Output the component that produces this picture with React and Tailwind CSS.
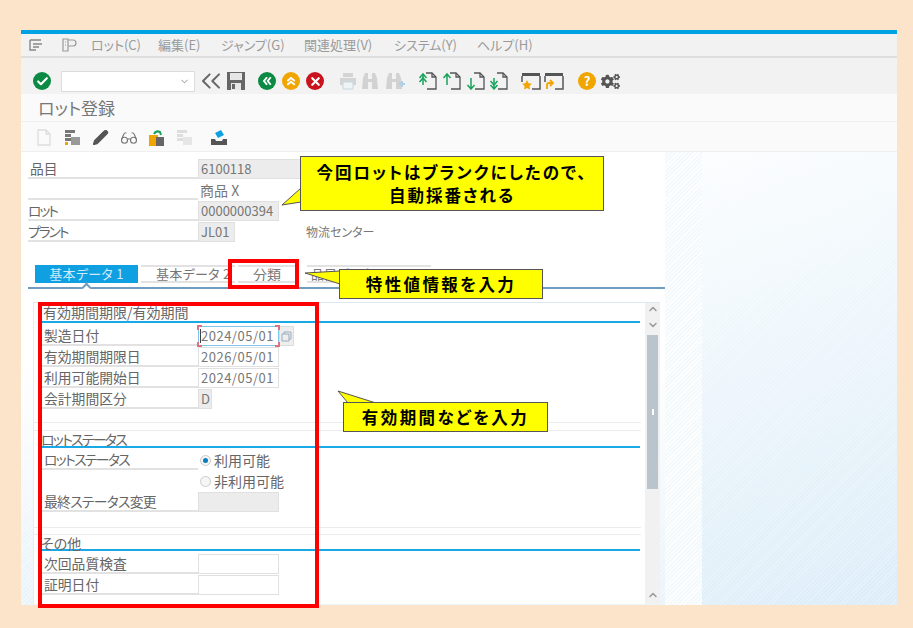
import React from 'react';
import { ChevronUp, ChevronDown, ChevronsLeft, Check, X, Pencil, Glasses } from 'lucide-react';
import { FaCogs } from 'react-icons/fa';

const menus = [
    { text: 'ロット(C)', w: 'w-[67px]' },
    { text: '編集(E)', w: 'w-[63px]' },
    { text: 'ジャンプ(G)', w: 'w-[83px]' },
    { text: '関連処理(V)', w: 'w-[90px]' },
    { text: 'システム(Y)', w: 'w-[83px]' },
    { text: 'ヘルプ(H)', w: 'w-[60px]' },
];

const panelLabel = 'w-[156px] pl-[2px]';

function Round({ color, children, className = '' }) {
    return <div className={`w-[18px] h-[18px] rounded-full flex items-center justify-center text-white ${color} ${className}`}>{children}</div>;
}

function Double({ dir }) {
    const d = dir === 'left' ? 'M8 3 4 8l4 5M13 3 9 8l4 5' : 'M3 8l5-4 5 4M3 13l5-4 5 4';
    return <svg width="12" height="12" viewBox="0 0 16 16" fill="none" stroke="#fff" strokeWidth="2.6"><path d={d} /></svg>;
}

function Save() {
    return (
        <svg width="18" height="18" viewBox="0 0 18 18">
            <path d="M0 0h18v18H0z" fill="#666" />
            <path d="M3 1h12v7H3z" fill="#e6e6e6" />
            <path d="M4 11h10v7H4z" fill="#e6e6e6" />
            <path d="M5 12h3v5H5z" fill="#666" />
        </svg>
    );
}

function Printer({ className }) {
    return (
        <svg width="18" height="18" viewBox="0 0 18 18" className={className}>
            <path d="M4 1h10v4H4z" fill="#d4d4d4" />
            <path d="M1 6h16v7H1z" fill="#d4d4d4" />
            <path d="M4 10h10v7H4z" fill="#eef3f6" stroke="#c8d8e0" />
        </svg>
    );
}

function Binoculars({ plus, className }) {
    return (
        <svg width="20" height="18" viewBox="0 0 20 18" className={className}>
            <path d="M2 6 4 1h3v6h4V1h3l2 5 1 11h-6V10H7v7H1z" fill="#d2d2d2" />
            {plus && <path d="M14 12h6M17 9v6" stroke="#a9d2ea" strokeWidth="2" />}
        </svg>
    );
}

function PageArrow({ down, dbl, className }) {
    const arrow = down ? 'M5 6v11M1.5 13 5 17l3.5-4' : 'M5 2v11M1.5 6 5 2l3.5 4';
    return (
        <svg width="20" height="18" viewBox="0 0 20 18" fill="none" className={className}>
            <path d="M8 1h6l4 4v12H9" stroke="#555" strokeWidth="1.3" />
            <path d="M14 1v4h4" stroke="#555" strokeWidth="1.3" />
            <path d={arrow} stroke="#19a35c" strokeWidth="1.5" />
            {dbl && <path d={down ? 'M1.5 9 5 13l3.5-4' : 'M1.5 10 5 6l3.5 4'} stroke="#19a35c" strokeWidth="1.5" />}
        </svg>
    );
}

function Win({ star, className }) {
    return (
        <svg width="20" height="18" viewBox="0 0 20 18" fill="none" className={className}>
            <path d="M1 1h18v3H1z" fill="#555" />
            <path d="M1 4v6M19 4v13h-8" stroke="#555" strokeWidth="1.5" />
            {star ? <path d="m6 8 1.6 3.2 3.4.5-2.5 2.4.6 3.4L6 16l-3 1.5.6-3.4L1 11.7l3.4-.5z" fill="#f0a500" />
                : <path d="M3 17v-4q0-2 2-2h3M6 8l3 3-3 3" stroke="#f0a500" strokeWidth="1.8" />}
        </svg>
    );
}

function Field({ label, w = 'w-[170px]', children }) {
    return (
        <div className="flex h-[20px] mb-px">
            <div className={`${w} shrink-0 border-b-2 border-[#e2e2e2] text-[13.8px] leading-[19px] text-[#666] whitespace-nowrap`}>{label}</div>
            {children}
        </div>
    );
}

function Box({ w, gray, children }) {
    return (
        <div className={`${w} h-[20px] border border-[#e0e0e0] pl-[2px] text-[13px] leading-[18px] text-[#777] whitespace-nowrap ${gray ? 'bg-[#ececec]' : 'bg-white'}`}>{children}</div>
    );
}

function Section({ title, h, pl = 'pl-[5px]', gap = 'mt-[3px]', children }) {
    return (
        <div>
            <div className={`ml-[4px] mr-[20px] ${h} border-b-2 border-[#18a9e6] ${pl} text-[14px] leading-[16px] text-[#666] whitespace-nowrap`}>{title}</div>
            <div className={`pl-[8px] w-[285px] ${gap}`}>{children}</div>
        </div>
    );
}

function Radio({ on, label }) {
    return (
        <div className="flex items-center text-[14px] text-[#666] h-[20px] pl-[2px]">
            <div className="w-[11px] h-[11px] rounded-full border border-[#ccc] bg-[#f5f5f5] flex items-center justify-center mr-[3px]">
                {on && <div className="w-[5px] h-[5px] rounded-full bg-[#0a7cc0]" />}
            </div>
            {label}
        </div>
    );
}

function Tab({ w, active, children }) {
    return (
        <div className={`${w} h-[18px] flex items-center justify-center text-[13px] whitespace-nowrap overflow-hidden ${active ? 'bg-[#0fa0e2] text-[#cdeafa]' : 'bg-white border-y-2 border-[#e2e2e2] text-[#777]'}`}>{children}</div>
    );
}

function Callout({ className, children }) {
    return <div className={`absolute bg-[#ffff00] border border-[#555] flex items-center justify-center text-center font-bold text-black ${className}`}>{children}</div>;
}

export default function App() {
    return (
        <div className="relative h-[628px] bg-[#fce4cb] pt-[30px] pl-[21px] overflow-hidden font-['Noto_Sans_CJK_JP',sans-serif] [font-feature-settings:'palt']">
            <div className="w-[876px] h-[575px] flex flex-col border-t-4 border-[#00a2e3] bg-white">
                {/* menu bar */}
                <div className="h-[24px] shrink-0 bg-[#f2f2f2] border-b-2 border-[#dedede] flex items-center pl-[8px] text-[13px] text-[#9a9a9a]">
                    <svg width="14" height="12" viewBox="0 0 14 12" fill="none" stroke="#888" strokeWidth="1.4"><path d="M1 1h11M1 1v10h6M4 5h9M4 8h6" /></svg>
                    <svg width="16" height="14" viewBox="0 0 16 14" fill="none" stroke="#999" strokeWidth="1.2" className="ml-[19px] mr-[13px]"><path d="M1 1h5v12H1zM6 2h5q3 0 3 3t-3 3H6M3 4h1M3 7h1" /></svg>
                    {menus.map((m) => <span key={m.text} className={`${m.w} whitespace-nowrap`}>{m.text}</span>)}
                </div>

                {/* system toolbar */}
                <div className="h-[36px] shrink-0 bg-[#f2f2f2] flex items-center pl-[12px] pt-[10px]">
                    <Round color="bg-[#0a8a42]"><Check size={13} strokeWidth={4} /></Round>
                    <div className="w-[134px] h-[21px] ml-[10px] bg-white border border-[#dcdcdc] flex items-center justify-end pr-[4px]">
                        <ChevronDown size={11} className="text-[#888]" />
                    </div>
                    <ChevronsLeft size={32} strokeWidth={1.5} className="text-[#666]" />
                    <Save />
                    <Round color="bg-[#0a8a42]" className="ml-[13px]"><Double dir="left" /></Round>
                    <Round color="bg-[#f0a500]" className="ml-[6px]"><Double dir="up" /></Round>
                    <Round color="bg-[#c9141e]" className="ml-[6px]"><X size={13} strokeWidth={4} /></Round>
                    <Printer className="ml-[15px]" />
                    <Binoculars className="ml-[4px]" />
                    <Binoculars plus className="ml-[4px]" />
                    <PageArrow dbl className="ml-[13px]" />
                    <PageArrow className="ml-[4px]" />
                    <PageArrow down className="ml-[4px]" />
                    <PageArrow down dbl className="ml-[3px]" />
                    <Win star className="ml-[12px]" />
                    <Win className="ml-[3px]" />
                    <Round color="bg-[#f0a500]" className="ml-[14px] text-[13px] font-bold">?</Round>
                    <FaCogs size={19} className="text-[#555] ml-[5px]" />
                </div>

                {/* title */}
                <div className="h-[28px] shrink-0 bg-[#fafafa] border-b border-[#efefef] pl-[17px] text-[17px] leading-[28px] text-[#777]">ロット登録</div>

                {/* app toolbar */}
                <div className="h-[30px] shrink-0 bg-[#fafafa] border-b border-[#efefef] flex items-center pl-[16px] pt-[2px]">
                    <svg width="14" height="17" viewBox="0 0 14 17" fill="none" stroke="#ddd" strokeWidth="1.3"><path d="M1 1h8l4 4v11H1zM9 1v4h4" /></svg>
                    <svg width="17" height="17" viewBox="0 0 17 17" className="ml-[13px]"><path d="M1 1h10v3H1zM1 5h6v3H1zM1 9h6v3H1z" fill="#777" /><path d="M7 8h9v8H7z" fill="#999" /><path d="M1 13h3v3H1z" fill="#f0a500" /></svg>
                    <Pencil size={17} fill="#555" strokeWidth={1.5} className="text-[#555] ml-[11px]" />
                    <Glasses size={18} strokeWidth={1.5} className="text-[#777] ml-[11px]" />
                    <svg width="17" height="18" viewBox="0 0 17 18" className="ml-[10px]"><path d="M1 6h9v11H1z" fill="#f0a500" /><path d="M8 8h8v9H8z" fill="#666" /><path d="M6 5q2-4 6-2l1 3" stroke="#19a35c" strokeWidth="2" fill="none" /></svg>
                    <svg width="17" height="17" viewBox="0 0 17 17" className="ml-[11px]"><path d="M1 1h10v3H1zM1 5h6v3H1zM1 9h6v3H1z" fill="#dedede" /><path d="M7 8h9v8H7z" fill="#e6e6e6" /></svg>
                    <svg width="18" height="17" viewBox="0 0 18 17" className="ml-[17px]"><path d="m5 4 6-3 3 5-6 3z" fill="#0fa0e2" /><path d="M1 10h4l1 2h6l1-2h4v6H1z" fill="#555" /></svg>
                </div>

                {/* body */}
                <div className="flex-1 flex min-h-0">
                    <div className="w-[644px] shrink-0 pt-[7px] bg-[repeating-linear-gradient(135deg,#ffffff66_0px,#ffffff66_1px,transparent_1px,transparent_3px),linear-gradient(180deg,#ffffff_45%,#e9f3fa_100%)]">
                        <div className="pl-[7px]">
                            <Field label={<span className="pl-[2px]">品目</span>}><Box w="w-[110px]" gray>6100118</Box></Field>
                            <Field label=""><span className="pl-[2px] text-[14px] leading-[20px] text-[#777]">商品 X</span></Field>
                            <Field label={<span className="tracking-[-2px]">ロット</span>}><Box w="w-[81px]" gray>0000000394</Box></Field>
                            <Field label={<span className="tracking-[-2px]">プラント</span>}>
                                <Box w="w-[37px]" gray>JL01</Box>
                                <span className="ml-[71px] text-[12px] leading-[20px] text-[#777]">物流センター</span>
                            </Field>
                        </div>

                        {/* tabs */}
                        <div className="mt-[23px] h-[24px] ml-[7px] border-b-2 border-[#6f9dc0] pl-[7px] flex gap-[3px] relative">
                            <Tab w="w-[103px] tracking-[0.3px]" active>基本データ 1</Tab>
                            <Tab w="w-[94px] pl-[15px] !justify-start tracking-[0.3px]">基本データ 2</Tab>
                            <Tab w="w-[58px] !text-[14px]">分類</Tab>
                            <div className="w-[5px]" />
                            <Tab w="w-[124px] pl-[4px] !justify-start">品目データ</Tab>
                            <div className="absolute left-[55px] bottom-[-2px] w-[7px] h-[7px] rotate-45 bg-white border-l-2 border-t-2 border-[#6f9dc0] translate-y-[2px]" />
                        </div>

                        {/* panel */}
                        <div className="relative mt-[13px] ml-[12px] w-[627px] h-[302px] bg-white border-t border-[#dbe9f2] border-l border-l-[#e3edf4]">
                            <Section title="有効期間期限/有効期間" h="h-[20px] pt-[1px]">
                                <Field label="製造日付" w={panelLabel}>
                                    <div className="relative">
                                        <div className="w-[81px] h-[20px] border border-[#7fc4ea] pl-[2px] text-[13px] leading-[18px] tracking-[0.5px] text-[#777] whitespace-nowrap bg-white">2024/05/01</div>
                                        <div className="absolute left-[2px] top-[3px] w-px h-[14px] bg-[#444]" />
                                        <div className="absolute -left-px -top-px w-[5px] h-[5px] border-l-2 border-t-2 border-[#e0707f]" />
                                        <div className="absolute -right-px -top-px w-[5px] h-[5px] border-r-2 border-t-2 border-[#e0707f]" />
                                        <div className="absolute -left-px -bottom-px w-[5px] h-[5px] border-l-2 border-b-2 border-[#e0707f]" />
                                        <div className="absolute -right-px -bottom-px w-[5px] h-[5px] border-r-2 border-b-2 border-[#e0707f]" />
                                    </div>
                                    <div className="w-[15px] h-[20px] bg-[#eee] border border-[#ddd] flex items-center justify-center">
                                        <svg width="11" height="11" viewBox="0 0 11 11" fill="none" stroke="#9ab" strokeWidth="1"><path d="M1 3h7v7H1zM3 3V1h7v7H8" /></svg>
                                    </div>
                                </Field>
                                <Field label="有効期間期限日" w={panelLabel}><Box w="w-[81px] tracking-[0.5px]">2026/05/01</Box></Field>
                                <Field label="利用可能開始日" w={panelLabel}><Box w="w-[81px] tracking-[0.5px]">2024/05/01</Box></Field>
                                <Field label="会計期間区分" w={panelLabel}><Box w="w-[14px]" gray>D</Box></Field>
                            </Section>
                            <div className="mt-[13px] h-[9px] mr-[19px] border-y border-[#ececec]" />
                            <Section title={<span className="tracking-[-1.8px]">ロットステータス</span>} h="h-[17px]" pl="pl-[3px]" gap="mt-[2px]">
                                <Field label={<span className="tracking-[-1.6px]">ロットステータス</span>} w={panelLabel}><Radio on label="利用可能" /></Field>
                                <Field label="" w={`${panelLabel} !border-b-0`}><Radio label="非利用可能" /></Field>
                                <Field label={<span className="tracking-[-0.7px]">最終ステータス変更</span>} w={panelLabel}><Box w="w-[81px]" gray /></Field>
                            </Section>
                            <div className="mt-[15px] h-[8px] mr-[19px] border-y border-[#ececec]" />
                            <Section title="その他" h="h-[16px]" pl="pl-[3px]">
                                <Field label="次回品質検査" w={panelLabel}><Box w="w-[81px]" /></Field>
                                <Field label="証明日付" w={panelLabel}><Box w="w-[81px]" /></Field>
                            </Section>

                            {/* scrollbar */}
                            <div className="absolute right-0 top-0 bottom-0 w-[15px] bg-[#f1f1f1] flex flex-col items-center text-[#999]">
                                <ChevronUp size={12} strokeWidth={3} />
                                <ChevronDown size={12} strokeWidth={3} className="mt-[4px]" />
                                <div className="w-[11px] h-[154px] mt-[4px] bg-[#b9c4cd] flex items-center justify-center">
                                    <div className="w-[2px] h-[6px] bg-white" />
                                </div>
                                <ChevronUp size={12} strokeWidth={3} className="mt-auto mb-[3px]" />
                            </div>
                        </div>
                    </div>

                    {/* hatched right side */}
                    <div className="w-[37px] shrink-0 bg-[repeating-linear-gradient(135deg,#ffffff_0px,#ffffff_1px,#f4f9fc_1px,#f4f9fc_3px)]" />
                    <div className="flex-1 bg-[repeating-linear-gradient(135deg,#ffffff44_0px,#ffffff44_1px,transparent_1px,transparent_3px),linear-gradient(160deg,#fbfdfe_0%,#dcedf8_100%)]" />
                </div>
            </div>

            {/* annotations over the screenshot */}
            <svg width="913" height="628" className="absolute left-0 top-0 pointer-events-none">
                <path d="M301 188 282 205 301 202z" fill="#ffff00" stroke="#555" />
                <path d="M340 271 305 273 340 284z" fill="#ffff00" stroke="#555" />
                <path d="M348 403 338 391 376 403z" fill="#ffff00" stroke="#555" />
            </svg>
            <Callout className="left-[300px] top-[156px] w-[304px] h-[55px] text-[16.5px] leading-[23px] tracking-[2px]">
                <div>今回ロットはブランクにしたので、<br />自動採番される</div>
            </Callout>
            <Callout className="left-[339px] top-[269px] w-[204px] h-[30px] text-[16.5px] tracking-[2.4px]">特性値情報を入力</Callout>
            <Callout className="left-[343px] top-[402px] w-[205px] h-[30px] text-[16.5px] tracking-[2.4px]">有効期間などを入力</Callout>
            <div className="absolute left-[228px] top-[259px] w-[71px] h-[30px] border-4 border-[#ff0000]" />
            <div className="absolute left-[38px] top-[302px] w-[281px] h-[306px] border-4 border-[#ff0000]" />
        </div>
    );
}
